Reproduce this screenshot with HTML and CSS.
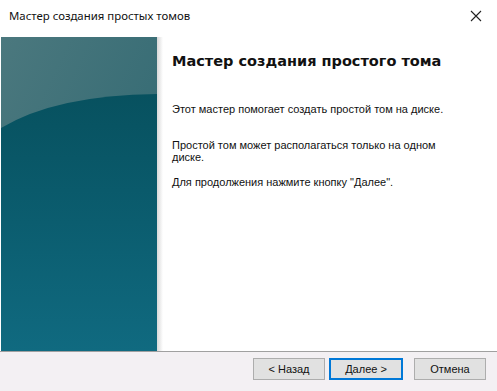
FILE: index.html
```html
<!DOCTYPE html>
<html lang="ru">
<head>
    <meta charset="UTF-8">
    <title>Мастер создания простых томов</title>
    <link rel="stylesheet" href="styles.css">
</head>
<body>
    <div class="window">
        <div class="titlebar">
            <span class="title">Мастер создания простых томов</span>
            <svg class="close" width="12" height="12" viewBox="0 0 12 12">
                <path d="M1 1 L11 11 M11 1 L1 11" stroke="#222" stroke-width="1.1" fill="none"/>
            </svg>
        </div>
        <div class="main">
            <div class="side">
                <svg width="156" height="314" viewBox="0 0 156 314" preserveAspectRatio="none">
                    <defs>
                        <linearGradient id="top" x1="0" y1="0" x2="1" y2="1">
                            <stop offset="0" stop-color="#4b787e"/>
                            <stop offset="1" stop-color="#2c6670"/>
                        </linearGradient>
                        <linearGradient id="low" x1="0" y1="0" x2="0" y2="1">
                            <stop offset="0" stop-color="#07515f"/>
                            <stop offset="0.5" stop-color="#0b5d6f"/>
                            <stop offset="1" stop-color="#106a80"/>
                        </linearGradient>
                    </defs>
                    <rect width="156" height="314" fill="url(#top)"/>
                    <path d="M0 91 Q55 58 156 57 L156 314 L0 314 Z" fill="url(#low)"/>
                </svg>
                <div class="shade"></div>
            </div>
            <div class="content">
                <h1>Мастер создания простого тома</h1>
                <p class="first">Этот мастер помогает создать простой том на диске.</p>
                <p>Простой том может располагаться только на одном диске.</p>
                <p>Для продолжения нажмите кнопку "Далее".</p>
            </div>
        </div>
        <div class="footer">
            <button class="btn">&lt; Назад</button>
            <button class="btn default">Далее &gt;</button>
            <button class="btn cancel">Отмена</button>
        </div>
    </div>
</body>
</html>
```
FILE: styles.css
```css
body{
    margin: 0;
    background: #fff;
    font-family: "Liberation Sans", Arial, sans-serif;
}
.window{
    width: 497px;
    height: 391px;
    display: flex;
    flex-direction: column;
}
.titlebar{
    height: 37px;
    display: flex;
    align-items: center;
    justify-content: space-between;
    padding: 0 15px 0 9px;
    box-sizing: border-box;
}
.title{
    font-family: "Noto Sans", sans-serif;
    font-size: 11.4px;
    color: #111;
    margin-top: -6px;
}
.close{
    margin-top: -6px;
}
.main{
    height: 314px;
    display: flex;
    border-bottom: 1px solid #a0a0a0;
}
.side{
    display: flex;
    padding-left: 1px;
}
.side svg{
    display: block;
}
.shade{
    width: 6px;
    background: linear-gradient(to right, #d8d8d8, #fff);
}
.content{
    padding-left: 9px;
    font-size: 11px;
    color: #111;
}
.content h1{
    font-family: "DejaVu Sans", Verdana, sans-serif;
    font-size: 14.5px;
    font-weight: bold;
    margin: 16px 0 0 0;
}
.content p{
    margin: 0 0 13px 0;
    width: 285px;
    line-height: 12px;
}
.content p.first{
    margin-top: 34px;
    margin-bottom: 24px;
}
.footer{
    flex: 1;
    background: #f3f0f3;
    display: flex;
    justify-content: flex-end;
    align-items: flex-start;
    padding: 6px 11px 0 0;
}
.btn{
    width: 72px;
    height: 22px;
    background: #e1e1e1;
    border: 1px solid #adadad;
    font-family: "Liberation Sans", Arial, sans-serif;
    font-size: 11px;
    color: #111;
    padding: 0;
    margin-left: 4px;
}
.btn.default{
    border: 2px solid #0078d7;
    width: 74px;
}
.btn.cancel{
    margin-left: 11px;
}
```
